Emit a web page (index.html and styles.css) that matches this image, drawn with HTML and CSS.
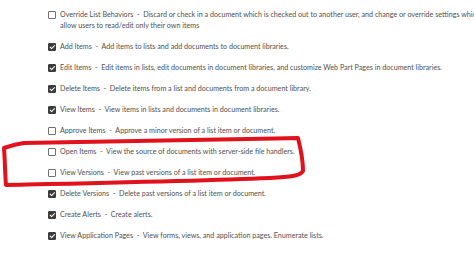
FILE: index.html
```html
<!DOCTYPE html>
<html>
<head>
<meta charset="utf-8">
<link rel="stylesheet" href="styles.css">
</head>
<body>
<div class="page">
  <ul class="perms">
    <li class="perm"><span class="box"></span><span class="txt">Override List Behaviors&nbsp; -&nbsp; Discard or check in a document which is checked out to another user, and change or override settings which<br>allow users to read/edit only their own items</span></li>
    <li class="perm"><span class="box on"></span><span class="txt">Add Items&nbsp; -&nbsp; Add items to lists and add documents to document libraries.</span></li>
    <li class="perm"><span class="box on"></span><span class="txt">Edit Items&nbsp; -&nbsp; Edit items in lists, edit documents in document libraries, and customize Web Part Pages in document libraries.</span></li>
    <li class="perm"><span class="box on"></span><span class="txt">Delete Items&nbsp; -&nbsp; Delete items from a list and documents from a document library.</span></li>
    <li class="perm"><span class="box on"></span><span class="txt">View Items&nbsp; -&nbsp; View items in lists and documents in document libraries.</span></li>
    <li class="perm"><span class="box"></span><span class="txt">Approve Items&nbsp; -&nbsp; Approve a minor version of a list item or document.</span></li>
    <li class="perm"><span class="box"></span><span class="txt">Open Items&nbsp; -&nbsp; View the source of documents with server-side file handlers.</span></li>
    <li class="perm"><span class="box"></span><span class="txt">View Versions&nbsp; -&nbsp; View past versions of a list item or document.</span></li>
    <li class="perm"><span class="box on"></span><span class="txt">Delete Versions&nbsp; -&nbsp; Delete past versions of a list item or document.</span></li>
    <li class="perm"><span class="box on"></span><span class="txt">Create Alerts&nbsp; -&nbsp; Create alerts.</span></li>
    <li class="perm"><span class="box on"></span><span class="txt">View Application Pages&nbsp; -&nbsp; View forms, views, and application pages. Enumerate lists.</span></li>
  </ul>
  <svg class="mark" width="474" height="255" viewBox="0 0 474 255">
    <path d="M6 185 C5 175 5 160 4 148 C10 146 16 144 24 143 C100 141 200 140 298 138 C301 150 303 160 303 171 C300 176 290 177 270 178 C200 181 100 183 6 185 Z" fill="none" stroke="#e0121c" stroke-width="4" stroke-linejoin="round" stroke-linecap="round"/>
  </svg>
</div>
</body>
</html>
```
FILE: styles.css
```css
html, body {
  margin: 0;
  padding: 0;
  background: #ffffff;
}
.page {
  position: relative;
  width: 474px;
  height: 255px;
  overflow: hidden;
}
.perms {
  list-style: none;
  margin: 0;
  padding: 9px 0 0 48px;
  display: flex;
  flex-direction: column;
  gap: 10px;
}
.perm {
  display: flex;
  align-items: flex-start;
  font-family: Lato, "Noto Sans", sans-serif;
  font-size: 7.15px;
  line-height: 11px;
  color: #505050;
  white-space: nowrap;
}
.box {
  flex: none;
  width: 6px;
  height: 6px;
  margin-top: 2px;
  margin-right: 4px;
  border: 1px solid #707070;
  border-radius: 1px;
  background: #fff;
  position: relative;
}
.box.on {
  background: #3c3c3c;
  border-color: #3c3c3c;
}
.box.on::after {
  content: "";
  position: absolute;
  left: 1.5px;
  top: 0px;
  width: 2px;
  height: 3.5px;
  border: solid #fff;
  border-width: 0 1px 1px 0;
  transform: rotate(45deg);
}
.txt {
  flex: none;
}
.mark {
  position: absolute;
  left: 0;
  top: 0;
  pointer-events: none;
}
```
